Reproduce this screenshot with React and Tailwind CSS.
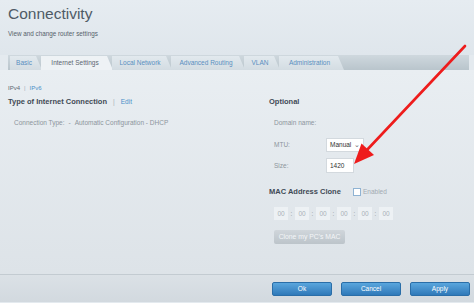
import React from "react";

const tabs = [
  { label: "Basic", w: "w-[32px]" },
  { label: "Internet Settings", w: "w-[72px]", active: true },
  { label: "Local Network", w: "w-[60px]" },
  { label: "Advanced Routing", w: "w-[74px]" },
  { label: "VLAN", w: "w-[36px]" },
  { label: "Administration", w: "w-[65px]" },
];

function MacField() {
  return (
    <span className="w-[14px] h-[13px] bg-[#edf1f4] flex items-center justify-center text-[#a9b1b8]">00</span>
  );
}

function Colon() {
  return <span className="w-[7px] text-center text-[#8c959c]">:</span>;
}

export default function App() {
  return (
    <div className="relative w-[474px] h-[303px] overflow-hidden bg-[#e4eaef] font-['Liberation_Sans',Arial,sans-serif] text-[6.5px]">
      <header className="h-[55px] px-[8px] pt-[3px] bg-gradient-to-b from-[#e6ecf1] to-[#dfe6ec]">
        <h1 className="text-[15.5px] leading-[22px] text-[#4f5b66]">Connectivity</h1>
        <p className="mt-[4px] text-[6.3px] text-[#56616b]">View and change router settings</p>
      </header>

      <div className="mx-[8px] mr-[5px] h-[15px] flex items-end pl-[2px] bg-gradient-to-b from-[#cfd8de] to-[#b9c5cc]">
        {tabs.map((t) => (
          <div
            key={t.label}
            className={
              "h-[14px] -mr-[1px] flex items-center justify-center [clip-path:polygon(0_0,calc(100%-6px)_0,100%_100%,0_100%)] " +
              t.w +
              (t.active
                ? " bg-[#eef2f5] text-[#5c6670]"
                : " bg-gradient-to-b from-[#e2e9ee] to-[#d3dce2] text-[#5a8fc0]")
            }
          >
            <span className="pr-[4px]">{t.label}</span>
          </div>
        ))}
      </div>

      <main className="h-[205px] flex bg-gradient-to-b from-[#e9eef2] to-[#dde3e8] border-b border-[#c3cbd1]">
        <section className="w-[269px] pl-[8px] pt-[14px]">
          <div className="h-[8px] flex items-center gap-[4px] text-[6px]">
            <span className="text-[#5d6872]">IPv4</span>
            <span className="text-[#a6afb6]">|</span>
            <span className="text-[#4a90c8]">IPv6</span>
          </div>
          <div className="mt-[5px] h-[10px] flex items-center gap-[6px]">
            <span className="text-[7.5px] font-bold text-[#3f4a55]">Type of Internet Connection</span>
            <span className="text-[#a6afb6]">|</span>
            <span className="text-[#4a90c8]">Edit</span>
          </div>
          <div className="mt-[12px] h-[8px] pl-[6px] flex items-center whitespace-nowrap text-[6.5px] text-[#8c959c]">
            <span className="shrink-0">Connection Type:</span>
            <span className="shrink-0 mx-[4px]">-</span>
            <span className="shrink-0">Automatic Configuration - DHCP</span>
          </div>
        </section>

        <section className="flex-1 pt-[27px]">
          <div className="h-[10px] flex items-center text-[7.5px] font-bold text-[#3f4a55]">Optional</div>
          <div className="pl-[5px] text-[#8c959c]">
            <div className="mt-[9px] h-[14px] flex items-center">Domain name:</div>
            <div className="mt-[8px] h-[14px] flex items-center">
              <span className="w-[52px]">MTU:</span>
              <span className="w-[38px] h-[14px] bg-white border border-[#d3d9de] flex items-center justify-between px-[3px] text-[#333]">
                Manual <span className="text-[#666]">⌄</span>
              </span>
            </div>
            <div className="mt-[6px] h-[15px] flex items-center">
              <span className="w-[52px]">Size:</span>
              <span className="w-[28px] h-[15px] bg-white border border-[#d3d9de] flex items-center px-[3px] text-[#333]">1420</span>
            </div>
          </div>
          <div className="mt-[14px] h-[10px] flex items-center">
            <span className="text-[7.5px] font-bold text-[#3f4a55] w-[84px]">MAC Address Clone</span>
            <span className="w-[8px] h-[8px] bg-white border border-[#8fb3d3] mr-[2px]" />
            <span className="text-[#a2abb2]">Enabled</span>
          </div>
          <div className="mt-[10px] pl-[5px] flex items-center">
            <MacField />
            <Colon />
            <MacField />
            <Colon />
            <MacField />
            <Colon />
            <MacField />
            <Colon />
            <MacField />
            <Colon />
            <MacField />
          </div>
          <button className="mt-[10px] ml-[5px] w-[71px] h-[14px] rounded-[2px] bg-gradient-to-b from-[#d0d6db] to-[#bcc4ca] text-[#f4f6f8] text-[6.8px] whitespace-nowrap">
            Clone my PC's MAC
          </button>
        </section>
      </main>

      <footer className="h-[27px] flex items-center justify-end gap-[9px] pr-[4px] bg-gradient-to-b from-[#dbe1e6] to-[#d2d9df]">
        {["Ok", "Cancel", "Apply"].map((b) => (
          <button
            key={b}
            className="w-[60px] h-[14px] rounded-[2px] bg-gradient-to-b from-[#5aa6dd] to-[#2f79b9] border border-[#2a6ea8] text-white text-[6.5px]"
          >
            {b}
          </button>
        ))}
      </footer>

      <svg className="absolute left-0 top-0 pointer-events-none" width="474" height="303">
        <line x1="465" y1="46" x2="366" y2="151" stroke="#ee1c1c" strokeWidth="2.6" strokeLinecap="round" />
        <polygon points="354,164 361.5,143.5 374,155" fill="#ee1c1c" />
      </svg>
    </div>
  );
}
